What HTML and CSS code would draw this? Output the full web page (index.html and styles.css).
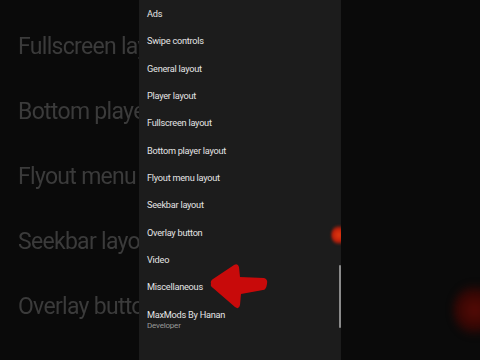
FILE: index.html
```html
<!DOCTYPE html>
<html>
<head>
<meta charset="utf-8">
<link rel="stylesheet" href="styles.css">
</head>
<body>
<div class="screen">
  <div class="backdrop">
    <div class="bg-list">
      <div class="bg-item">Fullscreen layout</div>
      <div class="bg-item">Bottom player layout</div>
      <div class="bg-item">Flyout menu layout</div>
      <div class="bg-item">Seekbar layout</div>
      <div class="bg-item">Overlay button</div>
    </div>
  </div>
  <div class="panel">
    <ul class="menu">
      <li class="item">Ads</li>
      <li class="item">Swipe controls</li>
      <li class="item">General layout</li>
      <li class="item">Player layout</li>
      <li class="item">Fullscreen layout</li>
      <li class="item">Bottom player layout</li>
      <li class="item">Flyout menu layout</li>
      <li class="item">Seekbar layout</li>
      <li class="item">Overlay button</li>
      <li class="item">Video</li>
      <li class="item">Miscellaneous</li>
      <li class="item item-two">
        <span class="title">MaxMods By Hanan</span>
        <span class="sub">Developer</span>
      </li>
    </ul>
    <div class="scrollbar"></div>
    <div class="dot"></div>
    <svg class="arrow" width="70" height="56" viewBox="0 0 70 56">
      <path d="M6 26 Q5 23 8 21 L29 7 Q33 5 34 9 L35 19 L59 20 Q63 21 62 26 Q61 32 58 32 L36 36 L35 47 Q34 52 30 49 L8 30 Q5 28 6 26 Z" fill="#c80a0a"/>
    </svg>
  </div>
  <div class="backdrop right">
    <div class="glow"></div>
  </div>
</div>
</body>
</html>
```
FILE: styles.css
```css
* { box-sizing: border-box; }
html, body {
  margin: 0;
  padding: 0;
  background: #0a0a0a;
}
body {
  width: 480px;
  height: 360px;
  overflow: hidden;
  font-family: Roboto, "Noto Sans", sans-serif;
}
.screen {
  display: grid;
  grid-template-columns: 139px 202px 139px;
  height: 360px;
}
.backdrop {
  position: relative;
  overflow: hidden;
  background: #0a0a0a;
}
.bg-list {
  padding-top: 14px;
  padding-left: 18px;
  filter: blur(0.7px);
}
.bg-item {
  height: 65px;
  line-height: 65px;
  font-size: 23px;
  letter-spacing: -0.7px;
  color: #3b3b3b;
  white-space: nowrap;
}
.panel {
  position: relative;
  overflow: hidden;
  background: #1c1c1c;
}
.menu {
  list-style: none;
  margin: 0;
  padding: 0 0 0 8px;
}
.item {
  height: 27.3px;
  display: flex;
  align-items: center;
  font-size: 9.2px;
  letter-spacing: -0.25px;
  color: #e4e4e4;
  white-space: nowrap;
}
.item-two {
  flex-direction: column;
  align-items: flex-start;
  justify-content: flex-start;
  padding-top: 9px;
  height: 40px;
}
.item-two .title { line-height: 12px; }
.item-two .sub {
  font-size: 8px;
  line-height: 10px;
  letter-spacing: -0.2px;
  color: #9a9a9a;
}
.scrollbar {
  position: absolute;
  right: 0;
  top: 265px;
  width: 2px;
  height: 63px;
  background: #8a8a8a;
  border-radius: 1px;
}
.dot {
  position: absolute;
  right: -6px;
  top: 224px;
  width: 16px;
  height: 22px;
  border-radius: 50%;
  background: radial-gradient(circle, #e03a10 0%, #c0200a 45%, rgba(160,20,10,0) 75%);
  filter: blur(1px);
}
.arrow {
  position: absolute;
  left: 66px;
  top: 258px;
}
.glow {
  position: absolute;
  right: -18px;
  top: 282px;
  width: 46px;
  height: 56px;
  border-radius: 50%;
  background: radial-gradient(circle, #550a05 0%, #380704 45%, rgba(20,3,2,0) 75%);
  filter: blur(3px);
}
```
